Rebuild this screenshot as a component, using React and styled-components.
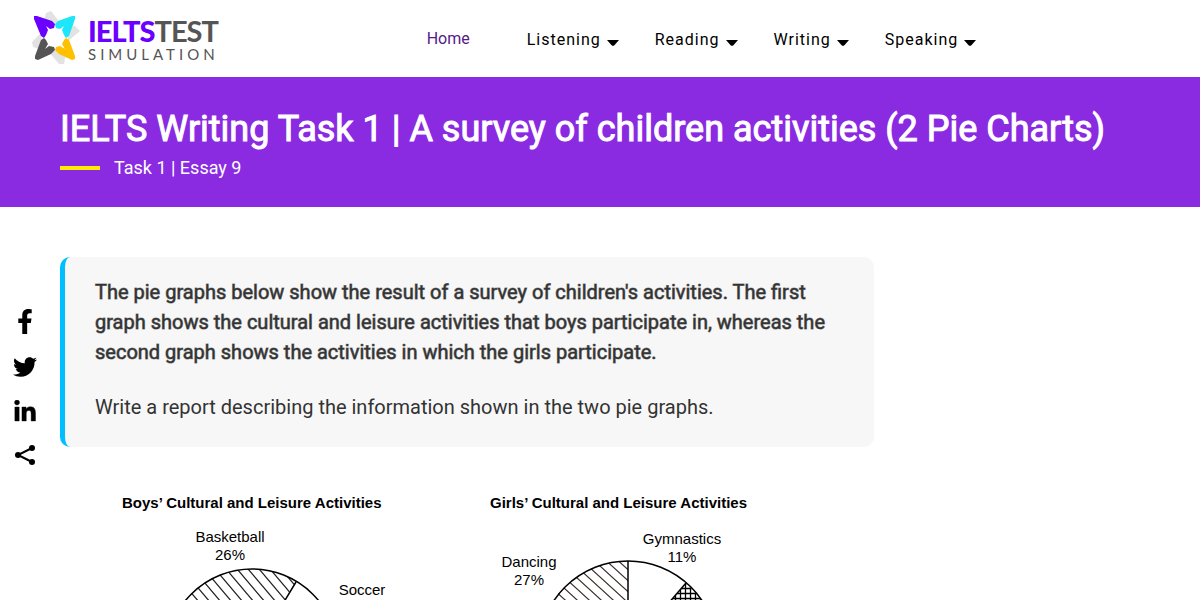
import React from "react";
import styled, { createGlobalStyle } from "styled-components";
import { FaFacebookF, FaTwitter, FaLinkedinIn } from "react-icons/fa";

const GlobalStyle = createGlobalStyle`
  * {
    box-sizing: border-box;
  }
  body {
    margin: 0;
    background-color: #fff;
    color: #333;
    font-family: Roboto, "Liberation Sans", sans-serif;
  }
  h1, h2, p, ul, figure {
    margin: 0;
    padding: 0;
  }
`;
const Page = styled.div`
  height: 100vh;
  overflow: hidden;
`;
const Header = styled.header`
  display: flex;
  align-items: center;
  height: 77px;
  padding: 0 32px;
`;
const LogoLink = styled.a`
  display: flex;
  align-items: center;
  gap: 8px;
  text-decoration: none;
`;
const LogoText = styled.span`
  display: flex;
  flex-direction: column;
  font-family: Lato, sans-serif;
  color: #555;
`;
const LogoName = styled.span`
  font-weight: 700;
  font-size: 29px;
  line-height: 30px;
  letter-spacing: -1px;

  b {
    color: #6a00ff;
  }
`;
const LogoTagline = styled.span`
  font-size: 15px;
  line-height: 16px;
  letter-spacing: 4px;
`;
const Nav = styled.nav`
  margin-left: 208px;
`;
const NavList = styled.ul`
  display: flex;
  align-items: center;
  gap: 36px;
  list-style: none;
`;
const HomeLink = styled.a`
  margin-right: 21px;
  color: #551a8b;
  font-size: 16px;
  text-decoration: none;
`;
const NavButton = styled.button`
  display: flex;
  align-items: center;
  gap: 6px;
  padding: 2px 0 0;
  border: 0;
  background: none;
  color: #000;
  font-family: inherit;
  font-size: 16px;
  letter-spacing: 1px;
  cursor: pointer;

  svg {
    margin-top: 7px;
  }
`;
const Hero = styled.section`
  padding: 28px 60px 24px;
  background-color: #8a2be2;
  color: #fff;
`;
const Title = styled.h1`
  font-size: 36px;
  font-weight: 400;
  line-height: 48px;
  -webkit-text-stroke: 1px currentColor;
`;
const Subtitle = styled.p`
  display: flex;
  align-items: center;
  gap: 14px;
  font-size: 18px;
  line-height: 30px;

  &::before {
    content: "";
    width: 40px;
    height: 4px;
    background-color: #ffeb00;
  }
`;
const ShareBar = styled.aside`
  position: fixed;
  left: 13px;
  top: 309px;
  display: flex;
  flex-direction: column;
  gap: 21px;
`;
const ShareLink = styled.a`
  display: flex;
  justify-content: center;
  width: 24px;
  color: #000;
`;
const Content = styled.main`
  display: grid;
  grid-template-columns: minmax(0, 1fr) 240px;
  gap: 26px;
  padding: 50px 60px;
`;
const Question = styled.section`
  padding: 20px 30px 25px;
  border-left: 5px solid #00bfff;
  border-radius: 10px;
  background-color: #f7f7f7;
  font-size: 20px;
  line-height: 30px;
`;
const Prompt = styled.p`
  margin-bottom: 25px;
  -webkit-text-stroke: 1px rgba(51, 51, 51, 0.6);
`;
const Charts = styled.div`
  display: flex;
  gap: 24px;
  margin-top: 48px;
  padding-left: 40px;
`;
const Chart = styled.figure`
  width: 344px;
  color: #000;
  font-family: "Liberation Sans", Arial, sans-serif;

  svg {
    display: block;
    width: 100%;
  }
`;
const ChartTitle = styled.figcaption`
  padding-left: 22px;
  font-size: 15px;
  font-weight: 700;
  line-height: 16px;
`;
const ChartLabel = styled.text`
  font-size: 15px;
  text-anchor: middle;
`;

const sections = ["Listening", "Reading", "Writing", "Speaking"];

const shareLinks = [
  { name: "Facebook", icon: <FaFacebookF size={25} /> },
  { name: "Twitter", icon: <FaTwitter size={24} /> },
  { name: "LinkedIn", icon: <FaLinkedinIn size={24} strokeWidth={8} /> },
  { name: "Share", icon: <ShareIcon /> },
];

function ShareIcon() {
  return (
    <svg width="20" height="20" viewBox="0 0 20 20" aria-hidden="true">
      <path d="M17 3 3 10l14 7" fill="none" stroke="currentColor" strokeWidth="2" />
      <circle cx="17" cy="3" r="3" />
      <circle cx="3" cy="10" r="3" />
      <circle cx="17" cy="17" r="3" />
    </svg>
  );
}

function Caret() {
  return (
    <svg width="12" height="6" viewBox="0 0 12 6" aria-hidden="true">
      <path d="M0 0h12L7.4 5.2q-1.4 1.2-2.8 0z" />
    </svg>
  );
}

function LogoMark() {
  return (
    <svg width="48" height="56" viewBox="0 0 48 56" aria-hidden="true">
      <path
        d="M14 2 19 0 29 13 43 15 48 20 36 30 32 53 27 53 17 41 1 36 0 31 9 22z"
        fill="#e2e2e2"
      />
      <path d="M23 12 34 17 36 26 34 36 23 40 12 36 9 26 12 17z" fill="#fff" />
      <path d="M2 8 2 5 5 5 20 10 23 13 22 17 18 18 14 15 16 19 14 24 12 27 9 25z" fill="#6a00ff" />
      <path d="M43 8 43 5 40 5 26 10 23 13 24 17 28 18 32 15 30 19 32 24 34 27 37 25z" fill="#1ee6fa" />
      <path d="M3 45 3 48 6 49 19 43 23 39 22 36 17 35 13 38 16 33 14 29 12 27 9 29z" fill="#555" />
      <path d="M43 45 43 48 40 49 27 43 23 39 24 36 28 35 33 38 30 33 32 29 34 27 37 29z" fill="#ffc000" />
    </svg>
  );
}

function BoysPie() {
  return (
    <svg viewBox="0 0 344 240">
      <defs>
        <pattern id="boys-hatch" width="11" height="13" patternUnits="userSpaceOnUse">
          <path d="M-11 -13 22 26M0 -13 33 26M-22 -13 11 26" stroke="#222" strokeWidth="1.2" fill="none" />
        </pattern>
      </defs>
      <path d="M152 144 196 70A86 86 0 0 0 75 105z" fill="url(#boys-hatch)" />
      <circle cx="152" cy="144" r="86" fill="none" stroke="#000" strokeWidth="1.5" />
      <path d="M196 71 152 144 75 105" fill="none" stroke="#000" strokeWidth="1.5" />
      <ChartLabel x="130" y="31">Basketball</ChartLabel>
      <ChartLabel x="130" y="49">26%</ChartLabel>
      <ChartLabel x="262" y="84">Soccer</ChartLabel>
    </svg>
  );
}

function GirlsPie() {
  return (
    <svg viewBox="0 0 344 240">
      <defs>
        <pattern id="girls-hatch" width="12" height="11" patternUnits="userSpaceOnUse">
          <path d="M-12 -11 24 22M0 -11 36 22M-24 -11 12 22" stroke="#3a2a2a" strokeWidth="1.2" fill="none" />
        </pattern>
        <pattern id="girls-grid" width="5" height="5" patternUnits="userSpaceOnUse">
          <path d="M0 2.5H5M2.5 0V5" stroke="#000" strokeWidth="1.3" fill="none" />
        </pattern>
      </defs>
      <path d="M160 139V50A89 89 0 0 0 71 150z" fill="url(#girls-hatch)" />
      <path d="M160 139 218 72A89 89 0 0 1 248 130z" fill="url(#girls-grid)" />
      <circle cx="160" cy="139" r="89" fill="none" stroke="#000" strokeWidth="1.5" />
      <path d="M160 50V139L218 72M160 139 248 130M160 139 71 150" fill="none" stroke="#000" strokeWidth="1.5" />
      <ChartLabel x="61" y="56">Dancing</ChartLabel>
      <ChartLabel x="61" y="74">27%</ChartLabel>
      <ChartLabel x="214" y="33">Gymnastics</ChartLabel>
      <ChartLabel x="214" y="51">11%</ChartLabel>
    </svg>
  );
}

function App() {
  return (
    <Page>
      <GlobalStyle />
      <Header>
        <LogoLink href="#">
          <LogoMark />
          <LogoText>
            <LogoName><b>IELTS</b>TEST</LogoName>
            <LogoTagline>SIMULATION</LogoTagline>
          </LogoText>
        </LogoLink>
        <Nav>
          <NavList>
            <li><HomeLink href="#">Home</HomeLink></li>
            {sections.map((section) => (
              <li key={section}>
                <NavButton type="button">
                  {section}
                  <Caret />
                </NavButton>
              </li>
            ))}
          </NavList>
        </Nav>
      </Header>
      <Hero>
        <Title>IELTS Writing Task 1 | A survey of children activities (2 Pie Charts)</Title>
        <Subtitle>Task 1 | Essay 9</Subtitle>
      </Hero>
      <ShareBar>
        {shareLinks.map(({ name, icon }) => (
          <ShareLink key={name} href="#" aria-label={name}>{icon}</ShareLink>
        ))}
      </ShareBar>
      <Content>
        <article>
          <Question>
            <Prompt>
              The pie graphs below show the result of a survey of children's activities. The first
              graph shows the cultural and leisure activities that boys participate in, whereas the
              second graph shows the activities in which the girls participate.
            </Prompt>
            <p>Write a report describing the information shown in the two pie graphs.</p>
          </Question>
          <Charts>
            <Chart>
              <ChartTitle>Boys’ Cultural and Leisure Activities</ChartTitle>
              <BoysPie />
            </Chart>
            <Chart>
              <ChartTitle>Girls’ Cultural and Leisure Activities</ChartTitle>
              <GirlsPie />
            </Chart>
          </Charts>
        </article>
      </Content>
    </Page>
  );
}

export default App;
